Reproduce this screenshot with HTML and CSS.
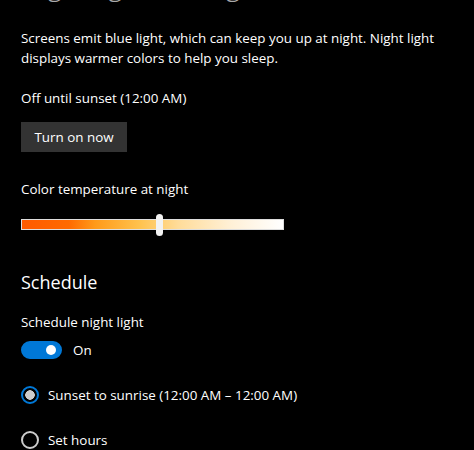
FILE: index.html
```html
<!DOCTYPE html>
<html lang="en">
<head>
    <meta charset="UTF-8">
    <title>Night light settings</title>
    <link rel="stylesheet" href="styles.css">
</head>
<body>
    <div class="page">
        <h1 class="page-title">Night light settings</h1>

        <p class="intro">Screens emit blue light, which can keep you up at night. Night light displays warmer colors to help you sleep.</p>

        <p class="status">Off until sunset (12:00 AM)</p>

        <button class="btn">Turn on now</button>

        <p class="label">Color temperature at night</p>
        <div class="slider">
            <div class="slider-track"></div>
            <div class="slider-thumb" style="left: 52.5%;"></div>
        </div>

        <h2 class="section">Schedule</h2>

        <p class="label">Schedule night light</p>
        <div class="toggle-row">
            <span class="toggle on"><span class="knob"></span></span>
            <span class="toggle-text">On</span>
        </div>

        <div class="radio-row">
            <span class="radio checked"></span>
            <span>Sunset to sunrise (12:00 AM – 12:00 AM)</span>
        </div>
        <div class="radio-row">
            <span class="radio"></span>
            <span>Set hours</span>
        </div>
    </div>
</body>
</html>
```

FILE: styles.css
```css
body {
    margin: 0;
    background: #000;
    color: #fff;
    font-family: "Open Sans", "Noto Sans", sans-serif;
    font-size: 13.4px;
}

.page {
    padding: 1px 21px 0;
}

p {
    margin: 0;
}

/* page heading, scrolled mostly out of view */
.page-title {
    font-weight: 300;
    font-size: 28px;
    line-height: 32px;
    margin: -33px 0 0;
    color: #aaa;
}

.intro {
    margin-top: 28px;
    line-height: 20px;
}

.status {
    margin-top: 20px;
    line-height: 20px;
}

.btn {
    display: block;
    margin-top: 14px;
    height: 30px;
    width: 106px;
    padding: 0;
    border: none;
    background: #333;
    color: #fff;
    font-family: inherit;
    font-size: 13.4px;
}

.label {
    margin-top: 27px;
    line-height: 20px;
}

.slider {
    position: relative;
    width: 263px;
    height: 22px;
    margin-top: 15px;
}

.slider-track {
    position: absolute;
    left: 0;
    right: 0;
    top: 5px;
    height: 11px;
    box-sizing: border-box;
    border: 1px solid #ddd;
    background: linear-gradient(90deg, #ff5a00 0%, #ff6a00 18%, #ff9a1a 28%, #ffc24d 45%, #ffdc9a 60%, #fff0d6 80%, #fff 100%);
}

.slider-thumb {
    position: absolute;
    top: 0;
    width: 7px;
    height: 22px;
    margin-left: -3px;
    border-radius: 4px;
    background: #f2f2f2;
}

.section {
    font-weight: 400;
    font-size: 18px;
    line-height: 26px;
    margin: 33px 0 0;
}

.section + .label {
    margin-top: 17px;
}

.toggle-row {
    display: flex;
    align-items: center;
    gap: 11px;
    margin-top: 9px;
}

.toggle {
    width: 41px;
    height: 18px;
    border-radius: 10px;
    border: 2px solid #fff;
    box-sizing: border-box;
    display: flex;
    align-items: center;
    padding: 0 4px;
}

.toggle.on {
    background: #0078d7;
    border-color: #0078d7;
    justify-content: flex-end;
}

.knob {
    width: 10px;
    height: 10px;
    border-radius: 50%;
    background: #fff;
}

.radio-row {
    display: flex;
    align-items: center;
    gap: 9px;
    margin-top: 26px;
    line-height: 20px;
}

.radio-row + .radio-row {
    margin-top: 25px;
}

.radio {
    width: 18px;
    height: 18px;
    border-radius: 50%;
    border: 2px solid #ccc;
    box-sizing: border-box;
}

.radio.checked {
    border-color: #0078d7;
    background: radial-gradient(circle, #ccc 0 4.5px, #000 5px);
}
```
